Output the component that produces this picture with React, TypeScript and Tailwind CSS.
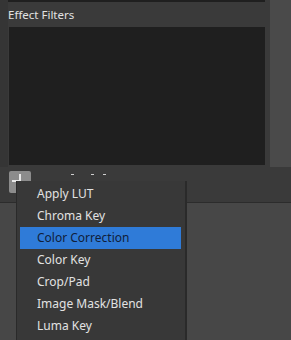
import React from 'react';

const items = ['Apply LUT', 'Chroma Key', 'Color Correction', 'Color Key', 'Crop/Pad', 'Image Mask/Blend', 'Luma Key'];

export default function App() {
  return (
    <div
      className="relative h-[340px] w-[291px] overflow-hidden bg-[#3a3a3a] text-[#e2e2e2]"
      style={{ fontFamily: '"Noto Sans", "Open Sans", sans-serif' }}
    >
      {/* 上部：滤镜列表面板 */}
      <div className="flex h-[167px]">
        <div className="w-[8px] bg-[#353535]" />
        <div className="flex flex-1 flex-col">
          <div className="mr-[5px] h-[2px] bg-[#1f1f1f]" />
          <div className="flex h-[25px] items-center text-[11.5px] leading-none">Effect Filters</div>
          <div className="mb-[2px] ml-[1px] mr-[5px] flex-1 bg-[#1f1f1f]" />
        </div>
        <div className="w-[21px] bg-[#4a4a4a]" />
      </div>

      {/* 工具栏 */}
      <div className="flex h-[36px] items-start border-b border-[#2c2c2c] pl-[9px] pt-[4px]">
        <div className="relative h-[22px] w-[22px] rounded-[2px] bg-[#8c8c8c]">
          <div className="absolute left-[10px] top-[3px] h-[8px] w-[2px] bg-[#e8e8e8]" />
          <div className="absolute left-[3px] top-[9px] h-[2px] w-[8px] bg-[#e8e8e8]" />
        </div>
        <div className="ml-[40px] mt-[3px] h-[1px] w-[3px] bg-[#cfcfcf]" />
        <div className="ml-[17px] mt-[3px] h-[1px] w-[3px] bg-[#cfcfcf]" />
        <div className="ml-[9px] mt-[3px] h-[1px] w-[3px] bg-[#cfcfcf]" />
      </div>
      <div className="h-full bg-[#474747]" />

      {/* 弹出菜单 */}
      <div className="absolute left-[16px] top-[181px] h-[170px] w-[171px] border-l border-r-2 border-[#2a2a2a] bg-[#383838] pt-[2px]">
        {items.map((item) => (
          <div
            key={item}
            className={`ml-[3px] mr-[4px] flex h-[22px] items-center pl-[17px] text-[12px] leading-none ${
              item === 'Color Correction' ? 'bg-[#2f7bd8] text-[#10203a]' : ''
            }`}
          >
            {item}
          </div>
        ))}
      </div>
    </div>
  );
}
